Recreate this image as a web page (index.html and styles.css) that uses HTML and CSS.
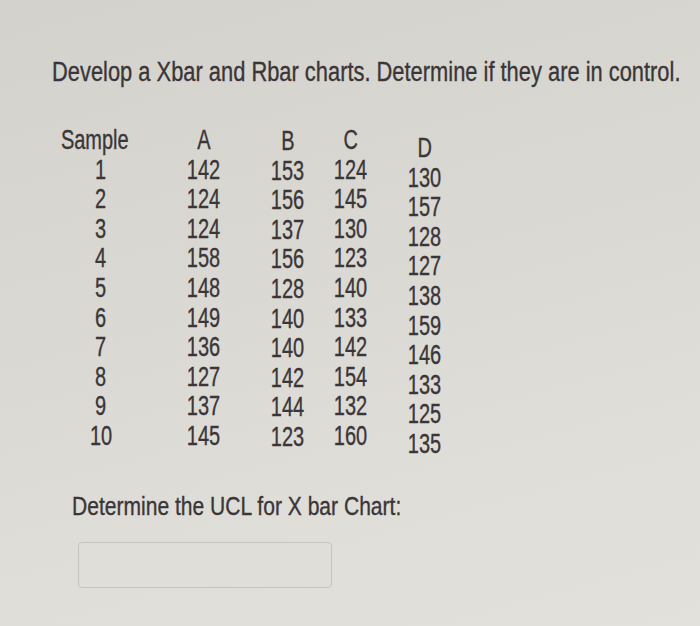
FILE: index.html
```html
<!DOCTYPE html>
<html>
<head>
<meta charset="utf-8">
<link rel="stylesheet" href="styles.css">
</head>
<body>
<div class="page">
  <h1 class="title"><span class="narrow-t">Develop a Xbar and Rbar charts. Determine if they are in control.</span></h1>
  <div class="data">
    <div class="col col-s">
      <div class="hd">Sample</div>
      <div>1</div><div>2</div><div>3</div><div>4</div><div>5</div><div>6</div><div>7</div><div>8</div><div>9</div><div>10</div>
    </div>
    <div class="col col-a">
      <div class="hd">A</div>
      <div>142</div><div>124</div><div>124</div><div>158</div><div>148</div><div>149</div><div>136</div><div>127</div><div>137</div><div>145</div>
    </div>
    <div class="col col-b">
      <div class="hd">B</div>
      <div>153</div><div>156</div><div>137</div><div>156</div><div>128</div><div>140</div><div>140</div><div>142</div><div>144</div><div>123</div>
    </div>
    <div class="col col-c">
      <div class="hd">C</div>
      <div>124</div><div>145</div><div>130</div><div>123</div><div>140</div><div>133</div><div>142</div><div>154</div><div>132</div><div>160</div>
    </div>
    <div class="col col-d">
      <div class="hd">D</div>
      <div>130</div><div>157</div><div>128</div><div>127</div><div>138</div><div>159</div><div>146</div><div>133</div><div>125</div><div>135</div>
    </div>
  </div>
  <p class="question"><span class="narrow-q">Determine the UCL for X bar Chart:</span></p>
  <div class="answer"></div>
</div>
</body>
</html>
```
FILE: styles.css
```css
html, body {
  margin: 0;
  padding: 0;
}
body {
  width: 700px;
  height: 626px;
  overflow: hidden;
  background: linear-gradient(165deg, #d4d2cc 0%, #d9d7d1 35%, #dfddd8 70%, #e3e1dc 100%);
  font-family: "Liberation Sans", Arial, sans-serif;
  color: #3a3638;
  -webkit-text-stroke: 0.35px #3a3638;
}
.page {
  padding: 54px 0 0 52px;
}
.title {
  margin: 0;
  font-size: 27px;
  font-weight: normal;
  line-height: 36px;
  white-space: nowrap;
}
.narrow-t {
  display: inline-block;
  margin-right: -150px;
  transform: scaleX(0.81);
  transform-origin: left center;
}
.data {
  display: flex;
  align-items: flex-start;
  margin-top: 36px;
  font-size: 27px;
  line-height: 29.6px;
}
.col {
  display: flex;
  flex-direction: column;
  align-items: center;
}
.col > div {
  white-space: nowrap;
  transform: scaleX(0.74);
  transform-origin: center center;
}
.col-s { width: 98px; }
.col-s .hd { margin-right: 12px; }
.col-a { width: 60px; margin-left: 24px; }
.col-b { width: 60px; margin-left: 24px; margin-top: 1px; }
.col-c { width: 50px; margin-left: 8px; }
.col-d { width: 50px; margin-left: 24px; margin-top: 8px; }
.question {
  margin: 31px 0 0 20px;
  font-size: 26px;
  line-height: 30px;
  white-space: nowrap;
}
.narrow-q {
  display: inline-block;
  transform: scaleX(0.81);
  transform-origin: left center;
}
.answer {
  margin: 21px 0 0 26px;
  width: 252px;
  height: 44px;
  border: 1px solid #c6c4bf;
  border-radius: 4px;
  background: #e0ded9;
}
```
